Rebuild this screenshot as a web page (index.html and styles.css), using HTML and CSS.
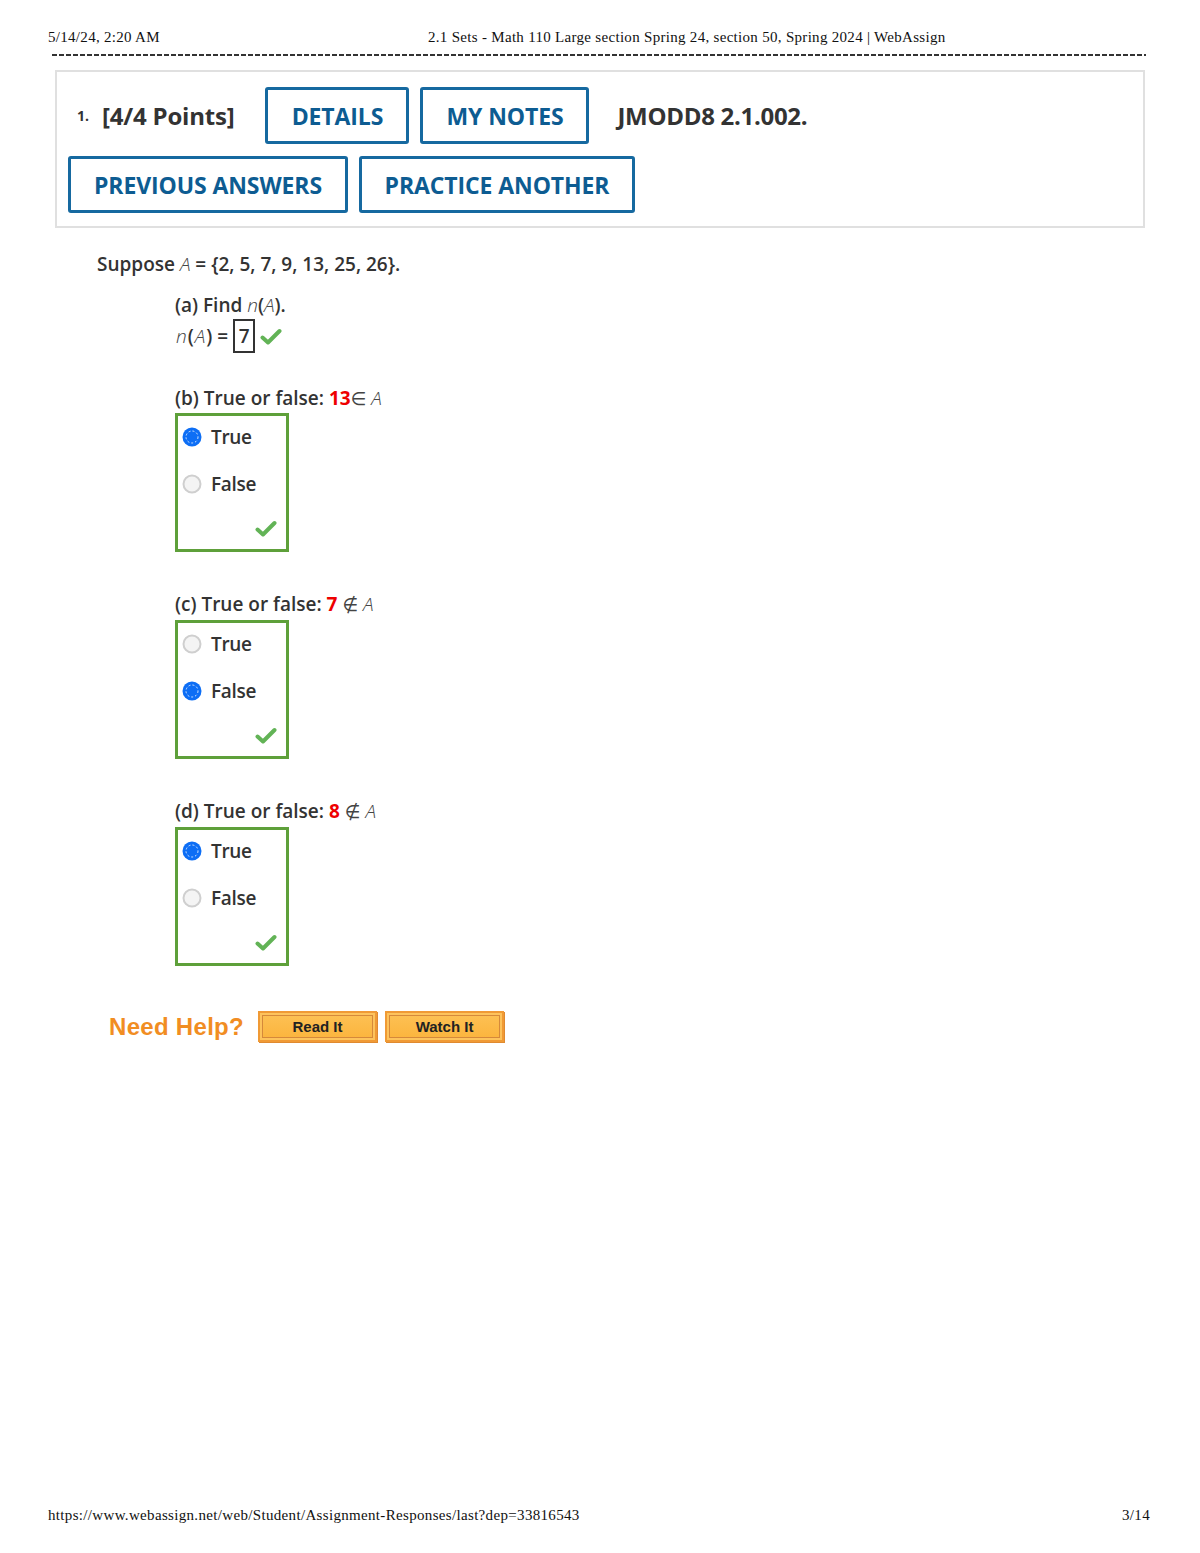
FILE: index.html
```html
<!DOCTYPE html>
<html>
<head>
<meta charset="utf-8">
<link rel="stylesheet" href="styles.css">
</head>
<body>
<div class="page">
  <header class="print-head">
    <span class="date">5/14/24, 2:20 AM</span>
    <span class="title">2.1 Sets - Math 110 Large section Spring 24, section 50, Spring 2024 | WebAssign</span>
  </header>
  <div class="dash"></div>

  <section class="qhead">
    <div class="row row1">
      <span class="qnum">1.</span>
      <span class="points">[4/4 Points]</span>
      <span class="btn btn-details">DETAILS</span>
      <span class="btn btn-notes">MY NOTES</span>
      <span class="qid">JMODD8 2.1.002.</span>
    </div>
    <div class="row row2">
      <span class="btn btn-prev">PREVIOUS ANSWERS</span>
      <span class="btn btn-practice">PRACTICE ANOTHER</span>
    </div>
  </section>

  <section class="question">
    <p class="stem">Suppose <i class="m">A</i> = {2, 5, 7, 9, 13, 25, 26}.</p>

    <div class="part part-a">
      <p class="plabel">(a) Find <i class="m">n</i>(<i class="m">A</i>).</p>
      <p class="answer-line"><i class="m">n</i>(<i class="m">A</i>) = <span class="ansbox">7</span>
        <svg class="check" width="22" height="18" viewBox="0 0 22 18"><path d="M2.5 9.5 L8 14.5 L19.5 3" fill="none" stroke="#62b356" stroke-width="4" stroke-linecap="round" stroke-linejoin="round"/></svg>
      </p>
    </div>

    <div class="part part-b">
      <p class="plabel">(b) True or false: <b class="red">13</b><span class="sym">∈</span> <i class="m">A</i></p>
      <div class="choices">
        <div class="choice"><svg class="radio" width="20" height="20" viewBox="0 0 20 20"><circle cx="10" cy="10" r="9.5" fill="#0d6ef5"/><circle cx="10" cy="10" r="6" fill="none" stroke="#fff" stroke-width="0.8" stroke-dasharray="2 2"/></svg><span>True</span></div>
        <div class="choice"><svg class="radio" width="20" height="20" viewBox="0 0 20 20"><circle cx="10" cy="10" r="8.5" fill="#f4f4f4" stroke="#cfcfcf" stroke-width="2"/></svg><span>False</span></div>
        <svg class="check bcheck" width="22" height="18" viewBox="0 0 22 18"><path d="M2.5 9.5 L8 14.5 L19.5 3" fill="none" stroke="#62b356" stroke-width="4" stroke-linecap="round" stroke-linejoin="round"/></svg>
      </div>
    </div>

    <div class="part part-cd">
      <p class="plabel">(c) True or false: <b class="red">7</b> <span class="sym">∉</span> <i class="m">A</i></p>
      <div class="choices">
        <div class="choice"><svg class="radio" width="20" height="20" viewBox="0 0 20 20"><circle cx="10" cy="10" r="8.5" fill="#f4f4f4" stroke="#cfcfcf" stroke-width="2"/></svg><span>True</span></div>
        <div class="choice"><svg class="radio" width="20" height="20" viewBox="0 0 20 20"><circle cx="10" cy="10" r="9.5" fill="#0d6ef5"/><circle cx="10" cy="10" r="6" fill="none" stroke="#fff" stroke-width="0.8" stroke-dasharray="2 2"/></svg><span>False</span></div>
        <svg class="check bcheck" width="22" height="18" viewBox="0 0 22 18"><path d="M2.5 9.5 L8 14.5 L19.5 3" fill="none" stroke="#62b356" stroke-width="4" stroke-linecap="round" stroke-linejoin="round"/></svg>
      </div>
    </div>

    <div class="part part-cd">
      <p class="plabel">(d) True or false: <b class="red">8</b> <span class="sym">∉</span> <i class="m">A</i></p>
      <div class="choices">
        <div class="choice"><svg class="radio" width="20" height="20" viewBox="0 0 20 20"><circle cx="10" cy="10" r="9.5" fill="#0d6ef5"/><circle cx="10" cy="10" r="6" fill="none" stroke="#fff" stroke-width="0.8" stroke-dasharray="2 2"/></svg><span>True</span></div>
        <div class="choice"><svg class="radio" width="20" height="20" viewBox="0 0 20 20"><circle cx="10" cy="10" r="8.5" fill="#f4f4f4" stroke="#cfcfcf" stroke-width="2"/></svg><span>False</span></div>
        <svg class="check bcheck" width="22" height="18" viewBox="0 0 22 18"><path d="M2.5 9.5 L8 14.5 L19.5 3" fill="none" stroke="#62b356" stroke-width="4" stroke-linecap="round" stroke-linejoin="round"/></svg>
      </div>
    </div>

    <div class="help">
      <span class="need">Need Help?</span>
      <span class="hbtn">Read It</span>
      <span class="hbtn">Watch It</span>
    </div>
  </section>

  <footer class="print-foot">
    <span>https://www.webassign.net/web/Student/Assignment-Responses/last?dep=33816543</span>
    <span>3/14</span>
  </footer>
</div>
</body>
</html>
```

FILE: styles.css
```css
* { box-sizing: border-box; }
html, body { margin: 0; padding: 0; background: #fff; }
p { margin: 0; }

.page {
  width: 1200px;
  min-height: 1553px;
  padding: 28px 50px 0 48px;
  display: flex;
  flex-direction: column;
  font-family: "Open Sans", sans-serif;
  color: #333;
}

.print-head {
  display: grid;
  grid-template-columns: 380px auto;
  font-family: "Liberation Serif", serif;
  font-size: 15px;
  letter-spacing: 0.3px;
  color: #111;
  height: 18px;
  line-height: 18px;
}

.dash {
  margin: 8px 4px 0 4px;
  height: 2px;
  background: repeating-linear-gradient(90deg, #333 0 5px, transparent 5px 7px);
}

.qhead {
  margin: 14px 5px 0 7px;
  border: 2px solid #e0e0e0;
  padding: 15px 11px 13px 11px;
  display: flex;
  flex-direction: column;
  gap: 12px;
}

.row { display: flex; align-items: center; }
.row1 { padding-left: 9px; }
.qnum { font-weight: 700; font-size: 14px; margin-right: 13px; color: #333; }
.points { font-weight: 700; font-size: 24px; letter-spacing: -0.2px; margin-right: 31px; color: #333; }
.qid { font-weight: 700; font-size: 24px; letter-spacing: -0.3px; margin-left: 28px; color: #333; }

.btn {
  height: 57px;
  border: 3px solid #1669a0;
  border-radius: 3px;
  display: inline-flex;
  align-items: center;
  justify-content: center;
  font-weight: 700;
  font-size: 23px;
  letter-spacing: -0.1px;
  color: #0d5c92;
}
.btn-details { width: 144px; }
.btn-notes { width: 169px; margin-left: 11px; }
.btn-prev { width: 280px; }
.btn-practice { width: 276px; margin-left: 11px; }

.question { padding-left: 49px; margin-top: 23px; }
.stem { font-size: 19px; font-weight: 600; letter-spacing: 0; line-height: 26px; }
.m { font-family: "Open Sans", sans-serif; font-style: italic; font-weight: 300; color: #444; }

.part { margin-left: 78px; margin-top: 39px; }
.part-a { margin-top: 15px; }
.part-b { margin-top: 32px; }
.plabel { font-size: 19px; font-weight: 600; letter-spacing: 0; line-height: 26px; }
.answer-line { font-size: 19px; font-weight: 600; letter-spacing: 0; display: flex; align-items: center; margin-top: 1px; line-height: 34px; }
.answer-line .m { margin: 0 1px; }
.ansbox {
  display: inline-flex;
  width: 22px;
  height: 34px;
  border: 2px solid #333;
  align-items: center;
  justify-content: center;
  margin-left: 5px;
  font-weight: 600;
}
.check { display: block; }
.answer-line .check { margin-left: 5px; margin-top: 2px; }

.red { color: #ee0000; font-weight: 700; }
.sym { font-family: "DejaVu Sans", sans-serif; font-weight: 400; font-size: 18px; color: #444; }

.choices {
  width: 114px;
  margin-top: 1px;
  border: 3px solid #5ea03a;
  padding: 11px 0 11px 4px;
  display: flex;
  flex-direction: column;
  gap: 27px;
}
.part-cd .choices { margin-top: 2px; }
.choice { display: flex; align-items: center; gap: 9px; height: 20px; font-size: 19px; font-weight: 600; letter-spacing: -0.3px; }
.radio { display: block; flex: none; }
.bcheck { align-self: flex-end; margin-right: 9px; margin-top: -1px; }

.help { display: flex; align-items: center; margin-top: 45px; margin-left: 12px; }
.need { font-family: "Liberation Sans", Arial, sans-serif; font-weight: 700; font-size: 24px; color: #f18d22; margin-right: 14px; letter-spacing: 0.3px; }
.hbtn {
  width: 119px;
  height: 31px;
  margin-right: 8px;
  border: 2px solid #f09a35;
  box-shadow: inset 0 0 0 2px #fdc35c, inset 0 0 0 3px #d5893a, 1px 1px 0 #e08a30;
  background: linear-gradient(#fdc155, #fbb43c);
  display: inline-flex;
  align-items: center;
  justify-content: center;
  font-family: "Liberation Sans", Arial, sans-serif;
  font-weight: 700;
  font-size: 15px;
  color: #222;
}

.print-foot {
  margin-top: auto;
  margin-bottom: 29px;
  display: flex;
  justify-content: space-between;
  font-family: "Liberation Serif", serif;
  font-size: 15px;
  letter-spacing: 0.33px;
  color: #111;
}
```
